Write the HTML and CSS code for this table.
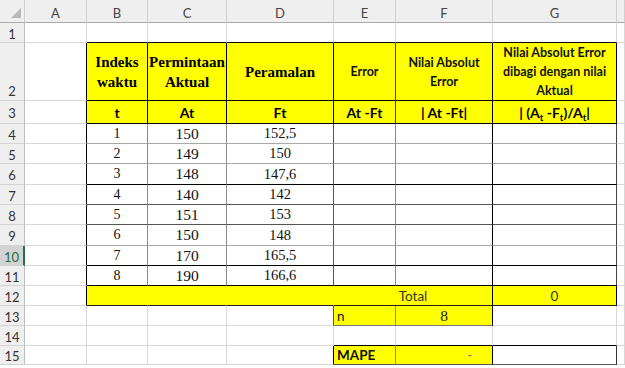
FILE: index.html
```html
<!DOCTYPE html>
<html>
<head>
<meta charset="utf-8">
<link rel="stylesheet" href="styles.css">
</head>
<body>
<table class="sheet">
  <colgroup>
    <col class="c-rh"><col class="c-a"><col class="c-b"><col class="c-c"><col class="c-d"><col class="c-e"><col class="c-f"><col class="c-g"><col class="c-h">
  </colgroup>
  <tr class="hdr">
    <td class="corner"><span class="tri"></span></td><td>A</td><td>B</td><td>C</td><td>D</td><td>E</td><td>F</td><td>G</td><td></td>
  </tr>
  <tr class="r1">
    <td class="rh">1</td><td></td><td></td><td></td><td></td><td></td><td></td><td></td><td></td>
  </tr>
  <tr class="r2 head">
    <td class="rh rh-low">2</td><td></td>
    <td class="y hs">Indeks<br>waktu</td>
    <td class="y hs">Permintaan<br>Aktual</td>
    <td class="y hs">Peramalan</td>
    <td class="y hc">Error</td>
    <td class="y hc">Nilai Absolut<br>Error</td>
    <td class="y hc">Nilai Absolut Error<br>dibagi dengan nilai<br>Aktual</td>
    <td></td>
  </tr>
  <tr class="r3 head">
    <td class="rh">3</td><td></td>
    <td class="y hb">t</td>
    <td class="y hb">At</td>
    <td class="y hb">Ft</td>
    <td class="y hb">At -Ft</td>
    <td class="y hb">| At -Ft|</td>
    <td class="y hb">| (A<sub>t</sub> -F<sub>t</sub>)/A<sub>t</sub>|</td>
    <td></td>
  </tr>
  <tr class="r4 data lg"><td class="rh">4</td><td></td><td class="nb">1</td><td class="nc">150</td><td class="nd">152,5</td><td></td><td></td><td></td><td></td></tr>
  <tr class="r5 data lg"><td class="rh">5</td><td></td><td class="nb">2</td><td class="nc">149</td><td class="nd">150</td><td></td><td></td><td></td><td></td></tr>
  <tr class="r6 data lk"><td class="rh">6</td><td></td><td class="nb">3</td><td class="nc">148</td><td class="nd">147,6</td><td></td><td></td><td></td><td></td></tr>
  <tr class="r7 data ld"><td class="rh">7</td><td></td><td class="nb">4</td><td class="nc">140</td><td class="nd">142</td><td></td><td></td><td></td><td></td></tr>
  <tr class="r8 data ld"><td class="rh">8</td><td></td><td class="nb">5</td><td class="nc">151</td><td class="nd">153</td><td></td><td></td><td></td><td></td></tr>
  <tr class="r9 data lg"><td class="rh">9</td><td></td><td class="nb">6</td><td class="nc">150</td><td class="nd">148</td><td></td><td></td><td></td><td></td></tr>
  <tr class="r10 data lk"><td class="rh sel">10</td><td></td><td class="nb">7</td><td class="nc">170</td><td class="nd">165,5</td><td></td><td></td><td></td><td></td></tr>
  <tr class="r11 data lk"><td class="rh">11</td><td></td><td class="nb">8</td><td class="nc">190</td><td class="nd">166,6</td><td></td><td></td><td></td><td></td></tr>
  <tr class="r12 total">
    <td class="rh">12</td><td class="edge"></td>
    <td class="y"></td><td class="y"></td><td class="y"></td>
    <td class="y tot" colspan="2">Total</td>
    <td class="y tot gz">0</td>
    <td></td>
  </tr>
  <tr class="r13 nrow">
    <td class="rh">13</td><td></td><td></td><td></td><td class="lft"></td>
    <td class="y lab">n</td>
    <td class="y val">8</td>
    <td></td><td></td>
  </tr>
  <tr class="r14 gap">
    <td class="rh">14</td><td></td><td></td><td></td><td></td>
    <td class="topk"></td><td class="topk"></td><td class="topk"></td><td></td>
  </tr>
  <tr class="r15 mape">
    <td class="rh">15</td><td></td><td></td><td></td><td class="lftk"></td>
    <td class="y lab bold">MAPE</td>
    <td class="y dash">-</td>
    <td class="box"></td><td></td>
  </tr>
</table>
</body>
</html>
```

FILE: styles.css
```css
html, body {
  margin: 0;
  padding: 0;
  background: #ffffff;
  overflow: hidden;
}

.sheet {
  border-collapse: separate;
  border-spacing: 0;
  table-layout: fixed;
  width: 625px;
  font-family: Lato, "Liberation Sans", sans-serif;
  font-size: 13px;
  color: #000;
}

.c-rh { width: 25px; }
.c-a { width: 62px; }
.c-b { width: 61px; }
.c-c { width: 79px; }
.c-d { width: 107px; }
.c-e { width: 62px; }
.c-f { width: 97px; }
.c-g { width: 124px; }
.c-h { width: 8px; }

.sheet td {
  box-sizing: border-box;
  padding: 0;
  border-right: 1px solid #d8d8d8;
  border-bottom: 1px solid #d8d8d8;
  white-space: nowrap;
  overflow: hidden;
  text-align: center;
  vertical-align: middle;
  height: 20px;
}

/* column header row */
.hdr td {
  height: 23px;
  background: #efefef;
  color: #444;
  border-bottom: 1px solid #ababab;
  border-right: 1px solid #cfcfcf;
  padding-top: 3px;
}
.corner { position: relative; }
.tri {
  position: absolute;
  right: 3px;
  bottom: 4px;
  width: 0;
  height: 0;
  border-left: 10px solid transparent;
  border-bottom: 10px solid #b8b8b8;
}

/* row headers */
.sheet td.rh {
  background: #efefef;
  color: #333;
  border-right: 1px solid #bdbdbd;
  border-bottom: 1px solid #d4d4d4;
  padding-top: 2px;
}
.sheet td.rh-low { vertical-align: bottom; padding-bottom: 1px; }
.sheet td.rh.sel {
  background: #d3d3d3;
  color: #1e6b3e;
  border-right: 2px solid #217346;
}

/* row heights */
.r2 td { height: 57px; }
.r3 td { height: 23px; }
.r6 td, .r9 td { height: 21px; }
.r15 td { height: 19px; }

/* top of header block */
.r1 td:nth-child(n+3):nth-child(-n+8) { border-bottom-color: #000; }

/* header block */
.head td:nth-child(2) { border-right-color: #000; }
.head td.y { border-right-color: #000; border-bottom-color: #000; }
.head td:nth-child(6) { border-right-color: #3a3a3a; }

.y { background: #ffff00; }

.hs {
  font-family: "Liberation Serif", "Times New Roman", serif;
  font-weight: bold;
  font-size: 15px;
  line-height: 20px;
  white-space: normal;
}
.hc {
  font-weight: bold;
  font-size: 12.5px;
  line-height: 19px;
  color: #111;
}
.hb {
  font-weight: bold;
  font-size: 14px;
  padding-top: 2px;
}
.hb sub {
  font-size: 9.5px;
  vertical-align: -3px;
  line-height: 0;
}

/* data rows */
.data td:nth-child(2) { border-right-color: #000; }
.data td:nth-child(3) { border-right-color: #8c8c8c; }
.data td:nth-child(4) { border-right-color: #8c8c8c; }
.data td:nth-child(5) { border-right-color: #555; }
.data td:nth-child(6) { border-right-color: #8c8c8c; }
.data td:nth-child(7) { border-right-color: #000; }
.data td:nth-child(8) { border-right-color: #444; }
.lg td:nth-child(n+3):nth-child(-n+8) { border-bottom-color: #a8a8a8; }
.ld td:nth-child(n+3):nth-child(-n+8) { border-bottom-color: #555; }
.lk td:nth-child(n+3):nth-child(-n+8) { border-bottom-color: #000; }

.nb, .nc, .nd {
  font-family: "Liberation Serif", "Times New Roman", serif;
  color: #111;
}
.nb { font-size: 14px; }
.nc { font-size: 15.5px; }
.nd { font-size: 14.5px; }

/* total row */
.sheet td.edge { border-right-color: #000; }
.total td.y { border-right-color: #ffff00; border-bottom-color: #222; }
.total td.tot { border-right-color: #000; }
.tot { color: #333; font-size: 13.5px; padding-top: 1px; }

/* n row */
.sheet td.lft { border-right-color: #555; }
.nrow td.lab { border-right-color: #8a8a60; border-bottom-color: #777; }
.nrow td.val { border-right-color: #000; border-bottom-color: #777; }
.sheet td.lab { text-align: left; padding-left: 3px; color: #111; font-size: 13.5px; }
.bold { font-weight: bold; }
.val {
  font-family: "Liberation Serif", "Times New Roman", serif;
  font-size: 15.5px;
  color: #222;
}

/* gap row */
.sheet td.topk { border-bottom-color: #000; }

/* mape row */
.sheet td.lftk { border-right-color: #000; }
.mape td.lab { border-right-color: #8a8a60; border-bottom-color: #555; }
.mape td.dash { border-right-color: #000; border-bottom-color: #555; text-align: right; padding-right: 20px; color: #777; }
.sheet td.box { border-right-color: #333; border-bottom-color: #555; }
```
